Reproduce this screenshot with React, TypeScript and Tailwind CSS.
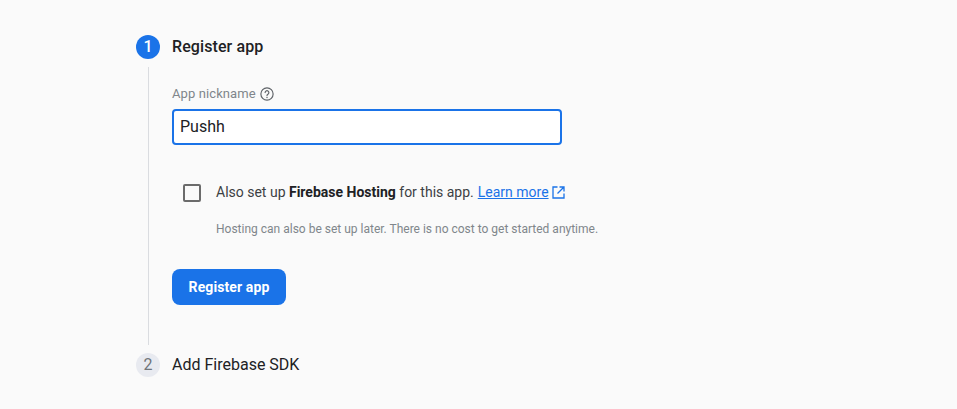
export default function App() {
  return (
    <div className="w-[957px] h-[409px] overflow-hidden bg-[#fafafa] pl-[136px] pt-[35px] font-['Roboto',sans-serif]">
      <div className="flex items-center h-6 gap-3">
        <div className="w-6 h-6 rounded-full bg-[#1a73e8] text-white text-[16px] font-medium flex items-center justify-center">1</div>
        <div className="text-[16px] font-medium leading-6 text-[#202124] tracking-[0.1px]">Register app</div>
      </div>
      <div className="flex mt-[8px] h-[278px]">
        <div className="ml-[12px] w-px bg-[#dadce0] h-[278px]" />
        <div className="ml-[23px] flex flex-col">
          <div className="flex items-center gap-[4px] mt-[19px] h-4">
            <span className="text-[13px] leading-4 text-[#80868b] tracking-[0.1px]">App nickname</span>
            <svg width="14" height="14" viewBox="0 0 24 24" fill="none" stroke="#5f6368" strokeWidth="2">
              <circle cx="12" cy="12" r="10.5" />
              <path d="M8.8 9.5a3.2 3.2 0 1 1 4.8 2.8c-1 .6-1.6 1.1-1.6 2.4" strokeLinecap="round" />
              <circle cx="12" cy="18" r="1.2" fill="#5f6368" stroke="none" />
            </svg>
          </div>
          <div className="mt-[7px] w-[390px] h-[36px] rounded-[4px] border-2 border-[#1a73e8] bg-white flex items-center pl-[6px] text-[16px] text-[#202124]">Pushh</div>
          <div className="flex mt-[38px] ml-[11px] gap-[15px]">
            <div className="w-[18px] h-[18px] mt-px rounded-[2px] border-2 border-[#6b6b6b]" />
            <div className="flex flex-col">
              <div className="flex items-center h-[19px] text-[14px] text-[#3c4043]">
                <span>Also set up&nbsp;</span>
                <span className="font-bold text-[#202124]">Firebase Hosting</span>
                <span>&nbsp;for this app.&nbsp;</span>
                <span className="ml-[0.5px] text-[#1a73e8] underline">Learn more</span>
                <svg className="ml-[3px]" width="13" height="13" viewBox="0 0 13 13" fill="none" stroke="#1a73e8" strokeWidth="1.3">
                  <path d="M5.5 1H1v11h11V7.5" />
                  <path d="M7.5 1H12v4.5M12 1L5.5 7.5" />
                </svg>
              </div>
              <div className="mt-[19px] text-[12px] leading-4 text-[#80868b]">Hosting can also be set up later. There is no cost to get started anytime.</div>
            </div>
          </div>
          <div className="mt-[32px] w-[114px] h-[36px] rounded-[8px] bg-[#1a73e8] text-white text-[14px] font-bold tracking-[0.1px] flex items-center justify-center">Register app</div>
        </div>
      </div>
      <div className="flex items-center h-6 gap-3 mt-[8px]">
        <div className="w-6 h-6 rounded-full bg-[#e8eaf0] text-[#70757a] text-[16px] flex items-center justify-center">2</div>
        <div className="text-[16px] leading-6 text-[#202124]">Add Firebase SDK</div>
      </div>
    </div>
  );
}
